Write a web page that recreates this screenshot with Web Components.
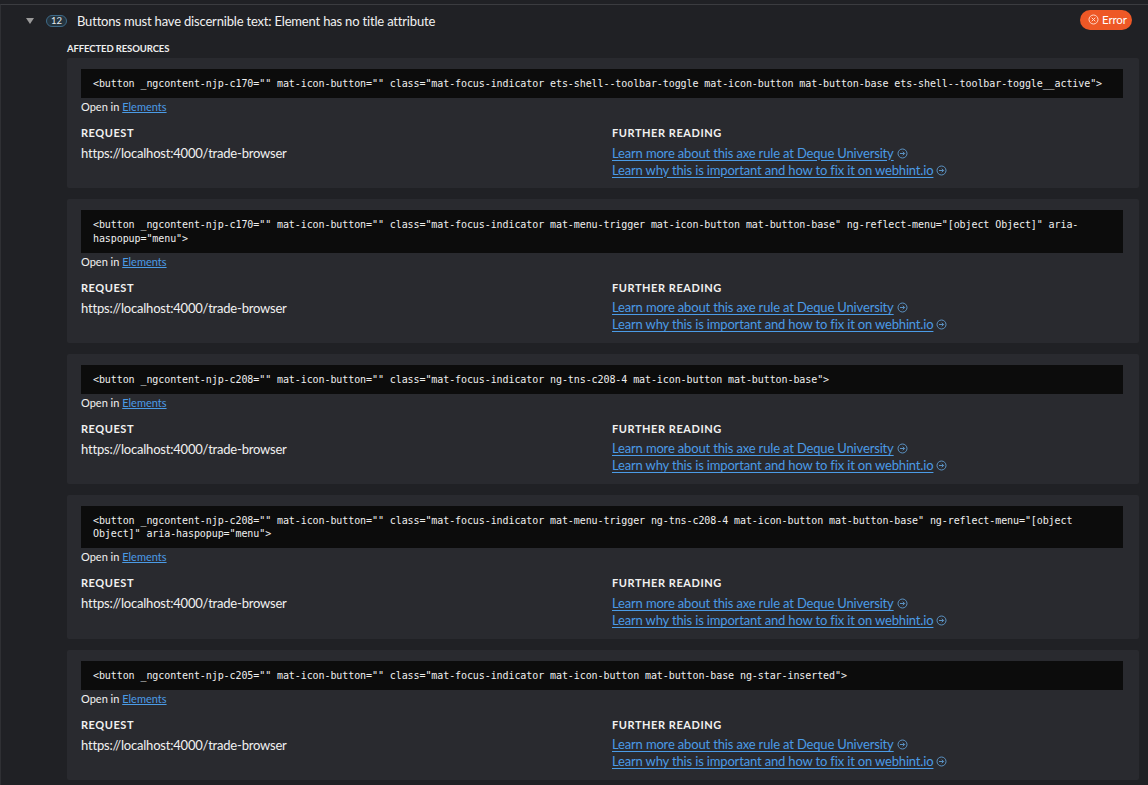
<!DOCTYPE html>
<html>
<head>
<meta charset="utf-8">
<title>Issues</title>
<style>
html, body { margin: 0; padding: 0; background: #202125; height: 785px; overflow: hidden; }
body { font-family: Lato, "Liberation Sans", sans-serif; color: #f1f1f1; }
</style>
</head>
<body>

<issue-group count="12" title="Buttons must have discernible text: Element has no title attribute">
  <resource-card request="https://localhost:4000/trade-browser">&lt;button _ngcontent-njp-c170="" mat-icon-button="" class="mat-focus-indicator ets-shell--toolbar-toggle mat-icon-button mat-button-base ets-shell--toolbar-toggle__active"&gt;</resource-card>
  <resource-card request="https://localhost:4000/trade-browser">&lt;button _ngcontent-njp-c170="" mat-icon-button="" class="mat-focus-indicator mat-menu-trigger mat-icon-button mat-button-base" ng-reflect-menu="[object Object]" aria-haspopup="menu"&gt;</resource-card>
  <resource-card request="https://localhost:4000/trade-browser">&lt;button _ngcontent-njp-c208="" mat-icon-button="" class="mat-focus-indicator ng-tns-c208-4 mat-icon-button mat-button-base"&gt;</resource-card>
  <resource-card request="https://localhost:4000/trade-browser">&lt;button _ngcontent-njp-c208="" mat-icon-button="" class="mat-focus-indicator mat-menu-trigger ng-tns-c208-4 mat-icon-button mat-button-base" ng-reflect-menu="[object Object]" aria-haspopup="menu"&gt;</resource-card>
  <resource-card request="https://localhost:4000/trade-browser">&lt;button _ngcontent-njp-c205="" mat-icon-button="" class="mat-focus-indicator mat-icon-button mat-button-base ng-star-inserted"&gt;</resource-card>
</issue-group>

<script>
const statusTemplate = document.createElement("template");
statusTemplate.innerHTML = `
  <style>
  :host { display: inline-flex; align-items: center; gap: 3px; box-sizing: border-box; width: 52px; height: 20px; padding: 0 0 0 8px; border-radius: 10px; background: #ee5826; color: #fff; font-size: 11.5px; letter-spacing: -0.1px; }
  svg { display: block; flex: none; }
  </style>
  <svg width="11" height="11" viewBox="0 0 11 11" fill="none" stroke="#ffd9cb" stroke-width="1">
    <circle cx="5.5" cy="5.5" r="4.5"/>
    <path d="M3.7 3.7l3.6 3.6M7.3 3.7l-3.6 3.6"/>
  </svg>
  <slot></slot>
`;

class StatusPill extends HTMLElement {
    constructor() {
        super();
        this.attachShadow({ mode: "open" });
        this.shadowRoot.appendChild(statusTemplate.content.cloneNode(true));
    }
}
customElements.define("status-pill", StatusPill);

const linkTemplate = document.createElement("template");
linkTemplate.innerHTML = `
  <style>
  :host { display: flex; align-items: center; gap: 3px; height: 17px; font-size: 13px; letter-spacing: -0.16px; }
  a { color: #4b9be6; text-decoration: underline; text-underline-offset: 2px; }
  svg { display: block; margin-top: 1px; }
  </style>
  <a href="#"><slot></slot></a>
  <svg width="11" height="11" viewBox="0 0 11 11" fill="none" stroke="#5b93c4" stroke-width="1">
    <circle cx="5.5" cy="5.5" r="4.5"/>
    <path d="M3 5.5h4.6M5.8 3.7l1.8 1.8-1.8 1.8"/>
  </svg>
`;

class ExternalLink extends HTMLElement {
    constructor() {
        super();
        this.attachShadow({ mode: "open" });
        this.shadowRoot.appendChild(linkTemplate.content.cloneNode(true));
    }
}
customElements.define("external-link", ExternalLink);

const fieldTemplate = document.createElement("template");
fieldTemplate.innerHTML = `
  <style>
  :host { display: block; }
  h3 { margin: 0 0 5px; font-size: 11px; line-height: 13px; font-weight: 700; letter-spacing: 0.55px; color: #f1f1f1; }
  </style>
  <h3 id="label"></h3>
  <slot></slot>
`;

class DetailField extends HTMLElement {
    constructor() {
        super();
        this.attachShadow({ mode: "open" });
        this.shadowRoot.appendChild(fieldTemplate.content.cloneNode(true));
    }

    connectedCallback() {
        this.shadowRoot.querySelector("#label").textContent = this.getAttribute("label");
    }
}
customElements.define("detail-field", DetailField);

const cardTemplate = document.createElement("template");
cardTemplate.innerHTML = `
  <style>
  :host { display: block; margin-bottom: 10.85px; padding: 11px 16px 10.25px 14px; border-radius: 2px; background: #292a2f; }
  code { display: block; padding: 8px 12px 7.5px; background: #0c0c0c; color: #efefef; font-family: "DejaVu Sans Mono", "Liberation Mono", monospace; font-size: 10px; line-height: 13.5px; letter-spacing: -0.085px; }
  .open { height: 16px; font-size: 11px; line-height: 18px; }
  .open a { color: #4b9be6; }
  .details { display: grid; grid-template-columns: 1fr 1fr; column-gap: 20px; margin-top: 12px; }
  .url { padding-top: 1px; font-size: 13px; line-height: 17px; letter-spacing: -0.2px; }
  </style>
  <code><slot></slot></code>
  <div class="open">Open in <a href="#">Elements</a></div>
  <div class="details">
    <detail-field label="REQUEST"><div class="url" id="request"></div></detail-field>
    <detail-field label="FURTHER READING">
      <external-link>Learn more about this axe rule at Deque University</external-link>
      <external-link>Learn why this is important and how to fix it on webhint.io</external-link>
    </detail-field>
  </div>
`;

class ResourceCard extends HTMLElement {
    constructor() {
        super();
        this.attachShadow({ mode: "open" });
        this.shadowRoot.appendChild(cardTemplate.content.cloneNode(true));
    }

    connectedCallback() {
        this.shadowRoot.querySelector("#request").textContent = this.getAttribute("request");
    }
}
customElements.define("resource-card", ResourceCard);

const groupTemplate = document.createElement("template");
groupTemplate.innerHTML = `
  <style>
  :host { display: block; box-sizing: border-box; min-height: 781px; margin-top: 4px; border-top: 1px solid #3b3c40; border-left: 1px solid #2f3034; }
  header { display: flex; align-items: center; height: 30px; padding: 1px 16px 0 25px; box-sizing: border-box; }
  .arrow { width: 0; height: 0; border: 4px solid transparent; border-top: 6px solid #9a9a9a; border-bottom: 0; margin-right: 12px; }
  .count { box-sizing: border-box; width: 21px; height: 12px; margin-right: 10px; border: 1px solid #3e6a88; border-radius: 6px; background: #24343f; color: #e4e9ec; font-size: 9.5px; line-height: 10px; text-align: center; }
  .title { flex: 1; font-size: 13px; letter-spacing: -0.18px; }
  status-pill { margin-top: -2px; }
  .body { padding: 8px 9px 0 66px; }
  h2 { margin: 0 0 3.2px; font-size: 9.5px; line-height: 12px; font-weight: 700; letter-spacing: -0.1px; color: #eee; }
  </style>
  <header>
    <div class="arrow"></div>
    <div class="count" id="count"></div>
    <div class="title" id="title"></div>
    <status-pill>Error</status-pill>
  </header>
  <div class="body">
    <h2>AFFECTED RESOURCES</h2>
    <slot></slot>
  </div>
`;

class IssueGroup extends HTMLElement {
    constructor() {
        super();
        this.attachShadow({ mode: "open" });
        this.shadowRoot.appendChild(groupTemplate.content.cloneNode(true));
    }

    connectedCallback() {
        this.shadowRoot.querySelector("#count").textContent = this.getAttribute("count");
        this.shadowRoot.querySelector("#title").textContent = this.getAttribute("title");
    }
}
customElements.define("issue-group", IssueGroup);
</script>
</body>
</html>
